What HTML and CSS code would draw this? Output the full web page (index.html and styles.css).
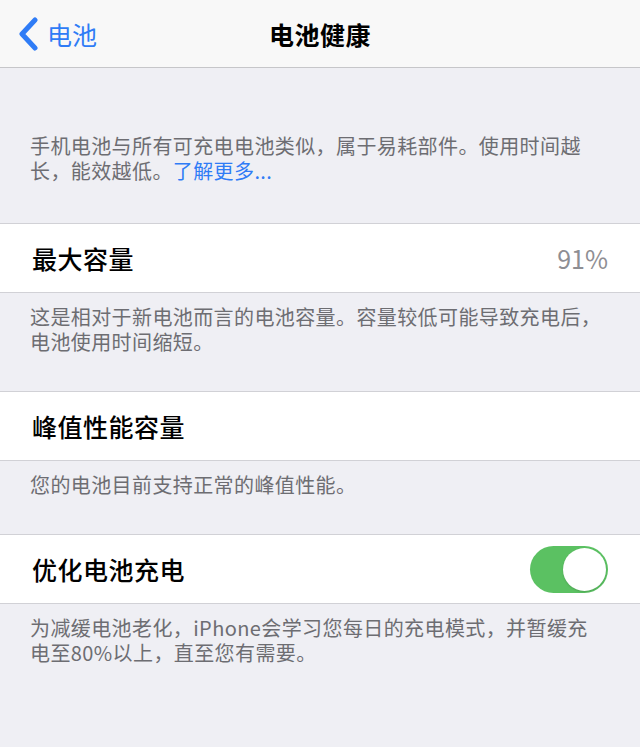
FILE: index.html
```html
<!DOCTYPE html>
<html lang="zh-CN">
<head>
    <meta charset="UTF-8">
    <meta name="viewport" content="width=device-width, initial-scale=1.0">
    <title>电池健康</title>
    <link rel="stylesheet" href="styles.css">
</head>
<body>
    <header class="nav-bar">
        <a class="back-link" href="#">
            <svg class="chevron" width="22" height="34" viewBox="0 0 22 34">
                <path d="M18 3 L5 17 L18 31" fill="none" stroke="currentColor" stroke-width="5" stroke-linecap="round" stroke-linejoin="round"/>
            </svg>
            <span>电池</span>
        </a>
        <h1 class="nav-title">电池健康</h1>
    </header>

    <main class="settings">
        <p class="group-footer intro">
            手机电池与所有可充电电池类似，属于易耗部件。使用时间越<br>长，能效越低。<a class="link" href="#">了解更多...</a>
        </p>

        <div class="cell">
            <span class="cell-label">最大容量</span>
            <span class="cell-value">91%</span>
        </div>
        <p class="group-footer">
            这是相对于新电池而言的电池容量。容量较低可能导致充电后，<br>电池使用时间缩短。
        </p>

        <div class="cell">
            <span class="cell-label">峰值性能容量</span>
        </div>
        <p class="group-footer">
            您的电池目前支持正常的峰值性能。
        </p>

        <div class="cell">
            <span class="cell-label">优化电池充电</span>
            <span class="toggle on"><span class="knob"></span></span>
        </div>
        <p class="group-footer">
            为减缓电池老化，iPhone会学习您每日的充电模式，并暂缓充<br>电至80%以上，直至您有需要。
        </p>
    </main>
</body>
</html>
```

FILE: styles.css
```css
body {
    margin: 0;
    font-family: "Noto Sans CJK SC", "Noto Sans", sans-serif;
    background: #efeff4;
    color: #000;
    width: 640px;
    min-height: 747px;
}

.nav-bar {
    position: relative;
    height: 67px;
    background: #f8f8f8;
    border-bottom: 1px solid #c6c6c9;
    display: flex;
    align-items: center;
    justify-content: center;
}

.back-link {
    position: absolute;
    left: 17px;
    top: 0;
    height: 67px;
    display: flex;
    align-items: center;
    gap: 8px;
    color: #2f7cf6;
    text-decoration: none;
    font-size: 25px;
}

.chevron {
    display: block;
}

.nav-title {
    margin: 0;
    font-size: 25px;
    font-weight: 700;
    letter-spacing: 0.5px;
}

.settings {
    padding-bottom: 40px;
}

.group-footer {
    margin: 0;
    padding: 11px 10px 37px 30px;
    font-size: 20px;
    line-height: 25px;
    letter-spacing: 0.4px;
    color: #6d6d72;
    white-space: nowrap;
}

.group-footer.intro {
    padding-top: 65px;
    padding-bottom: 40px;
}

.link {
    color: #2f7cf6;
    text-decoration: none;
}

.cell {
    height: 68px;
    background: #fff;
    border-top: 1px solid #d1d1d6;
    border-bottom: 1px solid #d1d1d6;
    display: flex;
    align-items: center;
    justify-content: space-between;
    padding: 0 32px;
}

.cell-label {
    font-size: 25px;
    font-weight: 500;
    letter-spacing: 0.5px;
}

.cell-value {
    font-size: 25px;
    color: #8e8e93;
}

.toggle {
    width: 78px;
    height: 47px;
    border-radius: 24px;
    background: #e5e5ea;
    display: flex;
    align-items: center;
    padding: 2px;
    box-sizing: border-box;
}

.toggle.on {
    background: #5bc162;
    justify-content: flex-end;
}

.knob {
    width: 43px;
    height: 43px;
    border-radius: 50%;
    background: #fff;
    box-shadow: 0 1px 2px rgba(0, 0, 0, 0.15);
}
```
